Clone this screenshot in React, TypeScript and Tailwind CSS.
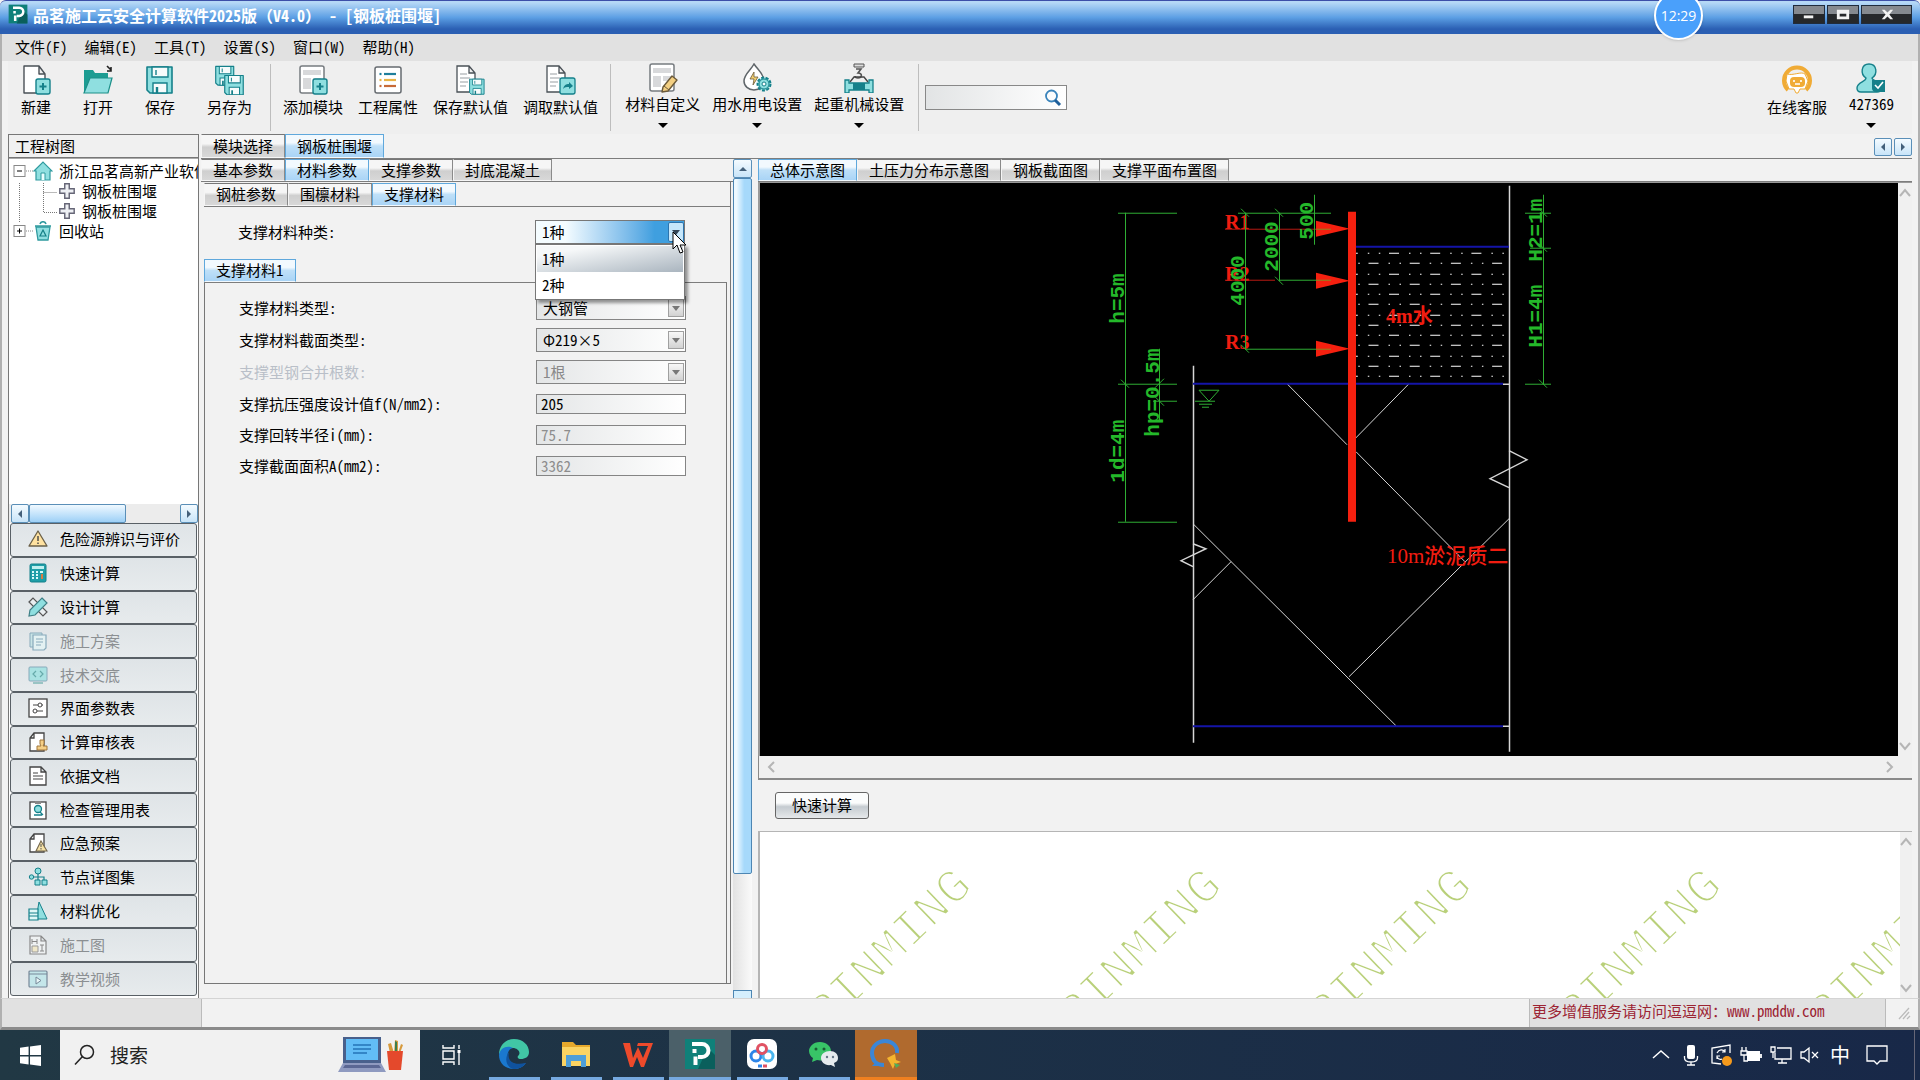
import type { ReactNode } from "react";

const TEAL = "#8fdfe0";
const DEEP = "#15808a";
const INK = "#4a5157";

function Svg({ box = "0 0 30 30", cls = "h-[30px] w-[30px]", children }: { box?: string; cls?: string; children: ReactNode }) {
  return (
    <svg viewBox={box} className={`shrink-0 ${cls}`} fill="none" aria-hidden="true">
      {children}
    </svg>
  );
}

const Sheet = () => <path d="M3 1h15l6 8v19H3z M18 1v8h6" fill="#fff" stroke={INK} strokeWidth="1.4" strokeLinejoin="round" />;
const SheetLines = () => <path d="M7 9h7M7 13h10M7 17h8M7 21h6" stroke="#9aa0a4" strokeWidth="1.2" />;
const Floppy = ({ x = 0, y = 0, s = 1 }) => (
  <g transform={`translate(${x} ${y}) scale(${s})`}>
    <path d="M1 2h25v26H4l-3-3z" fill={TEAL} stroke={DEEP} strokeWidth="1.6" strokeLinejoin="round" />
    <path d="M6 2h16v10H6z M7 18h14v10H7z" fill="#f6fbfb" stroke={DEEP} strokeWidth="1.4" />
    <path d="M11 22v6" stroke={DEEP} strokeWidth="2.4" />
    <path d="M10 5v5" stroke={DEEP} strokeWidth="1.4" />
  </g>
);
const PlusBadge = () => (
  <>
    <rect x="15" y="14" width="14" height="15" rx="2" fill={TEAL} stroke={DEEP} strokeWidth="1.4" />
    <path d="M22 18v7M18.500 21.500h7" stroke={DEEP} strokeWidth="2" />
  </>
);
const Panel = () => (
  <>
    <rect x="2" y="1" width="24" height="27" rx="2" fill="#fff" stroke="#777c80" strokeWidth="1.5" />
    <path d="M5 5h18v5H5z M5 13h8v11H5z M15 13h8v5h-8z" fill="#d8d9db" />
  </>
);

const icons: Record<string, ReactNode> = {
  new: <Svg><Sheet /><PlusBadge /></Svg>,
  open: (
    <Svg>
      <path d="M1 28V5h9l2 3h13v20z" fill="#1c9c92" />
      <path d="M7 13h22l-4 15H1z" fill={TEAL} stroke="#1c8f88" strokeWidth="1.2" />
      <path d="M24 1l4 4M28 2v4h-4" stroke="#222" strokeWidth="1.6" />
    </Svg>
  ),
  save: <Svg><Floppy x={1} /></Svg>,
  saveAs: <Svg><Floppy s={0.72} /><Floppy x={9} y={9} s={0.74} /></Svg>,
  addModule: <Svg><Panel /><PlusBadge /></Svg>,
  props: (
    <Svg>
      <rect x="2" y="2" width="26" height="26" rx="2" fill="#fff" stroke="#666b70" strokeWidth="1.5" />
      <path d="M11 9h12" stroke="#1f7f9c" strokeWidth="2.2" />
      <path d="M11 15h12" stroke="#e9b344" strokeWidth="2.2" />
      <path d="M11 21h12" stroke="#c76a37" strokeWidth="2.2" />
      <path d="M6.500 9h2" stroke="#1f7f9c" strokeWidth="2.2" />
      <path d="M6.500 15h2" stroke="#e9b344" strokeWidth="2.2" />
      <path d="M6.500 21h2" stroke="#c76a37" strokeWidth="2.2" />
    </Svg>
  ),
  saveDefault: <Svg><path d="M1 1h12l6 7v19H1z M13 1v7h6" fill="#fff" stroke={INK} strokeWidth="1.3" /><g transform="translate(-3 0)"><SheetLines /></g><Floppy x={13} y={13} s={0.58} /></Svg>,
  loadDefault: (
    <Svg>
      <path d="M1 1h12l6 7v19H1z M13 1v7h6" fill="#fff" stroke={INK} strokeWidth="1.300" />
      <g transform="translate(-3 0)"><SheetLines /></g>
      <rect x="14" y="13" width="15" height="16" rx="2" fill={TEAL} stroke={DEEP} strokeWidth="1.3" />
      <path d="M17 24c1-4 3-5 6-5v-2l4 4-4 3v-2c-3 0-4 0-6 2z" fill={DEEP} />
    </Svg>
  ),
  material: (
    <Svg>
      <Panel />
      <path d="M15 24L24 13l5 4-9 11-6 1z" fill="#f3cf82" stroke="#6b5a3a" strokeWidth="1.4" strokeLinejoin="round" />
      <path d="M16 23l5 4" stroke="#6b5a3a" />
    </Svg>
  ),
  water: (
    <Svg>
      <path d="M12 1c4 6 10 10 10 17a10 9 0 0 1-20 0C2 11 9 7 12 1z" fill="#fff" stroke="#60666a" strokeWidth="1.5" />
      <path d="M12 9l-4 7h4l-1 6 5-8h-4z" fill="#f2cf70" stroke="#6b5a3a" strokeWidth=".8" />
      <circle cx="22" cy="21" r="6.500" fill={TEAL} stroke={DEEP} strokeWidth="2" strokeDasharray="3 1.500" />
      <circle cx="22" cy="21" r="5" fill={TEAL} stroke={DEEP} />
      <circle cx="22" cy="21" r="2" fill="#fff" stroke={DEEP} />
    </Svg>
  ),
  crane: (
    <Svg>
      <path d="M10 1h10v3H10z" fill="#ddd" stroke="#555" />
      <path d="M12 6h5l-3 4c5 0 4 5 0 5-2 0-3-1-3-2" stroke="#555" strokeWidth="1.600" />
      <path d="M6 19l4-5h10l4 5" stroke="#444" strokeWidth="1.4" />
      <path d="M1 17h4v3h20v-3h4v13h-4v-3H5v3H1z" fill={TEAL} stroke={DEEP} strokeWidth="1.3" />
      <rect x="9" y="20" width="12" height="7" fill={DEEP} />
    </Svg>
  ),
  service: (
    <Svg>
      <path d="M6 25a13 13 0 1 1 18 0" stroke="#f0ab35" strokeWidth="4" />
      <path d="M5 9c6 2 14-3 18 0l3 7-3 8h-5l-2 4h-2l-2-4H7l-3-8z" fill="#fff" stroke="#f0ab35" />
      <rect x="8" y="12" width="15" height="10" rx="4" fill="#f0ab35" />
      <path d="M12 15v2M19 15v2M13 19h5" stroke="#fff" strokeWidth="1.6" />
    </Svg>
  ),
  user: (
    <Svg>
      <path d="M10 15c-6-4-5-14 3-14s9 10 3 14c0 3 10 3 10 10 0 3-3 4-5 4H5c-3 0-4-2-4-4 0-6 9-6 9-10z" fill={TEAL} stroke={DEEP} strokeWidth="1.4" />
      <path d="M16 17h13v12H20c-3 0-4-2-4-4z" fill={DEEP} />
      <path d="M19 22l3 3 5-6" stroke="#fff" strokeWidth="1.6" />
    </Svg>
  ),
};

const S = ({ children }: { children: ReactNode }) => <Svg box="0 0 20 20" cls="h-5 w-5">{children}</Svg>;
const SmallSheet = () => <path d="M6 1h10v18H2V6z M6 1v5H2" fill="#fff" stroke="#444" strokeWidth="1.3" />;

const sideItems: { label: string; off?: boolean; icon: ReactNode }[] = [
  { label: "危险源辨识与评价", icon: <S><path d="M10 2l9 15H1z" fill="#ffe2a0" stroke="#6b6048" strokeWidth="1.3" strokeLinejoin="round" /><path d="M10 7v5M10 13.500v1.500" stroke="#444" strokeWidth="1.4" /></S> },
  { label: "快速计算", icon: <S><rect x="2" y="1" width="16" height="18" rx="1.500" fill="#1f9fa8" stroke={DEEP} /><path d="M4 3h12v3H4z" fill="#bff0f0" /><path d="M4 9h2M8 9h2M12 9h3M4 12h2M8 12h2M4 15h2M8 15h2" stroke="#d9fafa" strokeWidth="1.8" /><path d="M13 11h2v5h-2z" fill="#d87c42" /></S> },
  { label: "设计计算", icon: <S><path d="M1 5l4-4 14 14-4 4z" fill="#e9eef0" stroke="#555" strokeWidth="1.2" /><path d="M14 1l5 5L7 18l-6 1 1-6z" fill={TEAL} stroke="#3f7f86" strokeWidth="1.2" /></S> },
  { label: "施工方案", off: true, icon: <S><path d="M2 2h12v14H2z" fill="#c9e4e6" stroke="#8ab" /><path d="M5 4h13v13l-2 2H5z" fill="#e3f1f2" stroke="#8ab" strokeWidth="1.2" /><path d="M8 8h7M8 11h7M8 14h5" stroke="#8ab" /></S> },
  { label: "技术交底", off: true, icon: <S><rect x="1" y="2" width="18" height="14" rx="1" fill="#a9e2e2" stroke="#8ab" /><path d="M8 6L5 9l3 3M12 6l3 3-3 3" stroke="#6aa" strokeWidth="1.2" /><path d="M5 18h10" stroke="#8bb" strokeWidth="1.6" /></S> },
  { label: "界面参数表", icon: <S><rect x="1" y="1" width="18" height="18" fill="#fff" stroke="#444" strokeWidth="1.3" /><path d="M5 7h10M5 13h10" stroke="#444" /><circle cx="12" cy="7" r="2" fill="#fff" stroke="#444" /><circle cx="7" cy="13" r="2" fill="#fff" stroke="#444" /></S> },
  { label: "计算审核表", icon: <S><SmallSheet /><path d="M12 8h4v4l-1 2h4v4H9v-4h4l-1-2z" fill="#f5cf85" stroke="#a2773a" /></S> },
  { label: "依据文档", icon: <S><path d="M2 1h11l5 5v13H2z M13 1v5h5" fill="#fff" stroke="#444" strokeWidth="1.3" /><path d="M5 7h5M5 10h10M5 13h10" stroke="#444" strokeWidth="1.2" /></S> },
  { label: "检查管理用表", icon: <S><rect x="2" y="2" width="16" height="17" fill="#fff" stroke="#444" strokeWidth="1.3" /><path d="M7 1h6v3H7z" fill="#888" /><circle cx="10" cy="9" r="3.500" fill={TEAL} stroke={DEEP} strokeWidth="1.3" /><path d="M12 12l3 3M6 15h8" stroke={DEEP} strokeWidth="1.3" /></S> },
  { label: "应急预案", icon: <S><SmallSheet /><path d="M13 8l6 10H8z" fill="#f6e2a6" stroke="#75684c" strokeWidth="1.1" /><path d="M13 11v3M13 15v1.500" stroke="#555" /></S> },
  { label: "节点详图集", icon: <S><path d="M10 5v9M4 10h6M10 10h6v4" stroke={DEEP} strokeWidth="1.2" /><circle cx="10" cy="4" r="3" fill={TEAL} stroke={DEEP} /><circle cx="3.500" cy="10" r="2.200" fill={TEAL} stroke={DEEP} /><path d="M7 13h5v5H7zM14 13h5v5h-5z" fill={TEAL} stroke={DEEP} /></S> },
  { label: "材料优化", icon: <S><path d="M11 1l8 17H8z" fill={TEAL} stroke={DEEP} /><path d="M1 8h9v11H1z" fill="#dff7f7" stroke={DEEP} strokeWidth="1.2" /><path d="M1 12h9M1 15h9" stroke={DEEP} strokeWidth="1.2" /></S> },
  { label: "施工图", off: true, icon: <S><path d="M2 1h11l5 5v13H2z M13 1v5h5" fill="#eef1f2" stroke="#888" strokeWidth="1.2" /><path d="M4 4v5M9 4v5M4 6.500h5M12 10h4M12 16h4M14 10v6" stroke="#888" /><path d="M4 11h6v6H4z" fill="#efe7c9" stroke="#999" /></S> },
  { label: "教学视频", off: true, icon: <S><rect x="1" y="2" width="18" height="16" rx="1" fill="#c4e6ea" stroke="#789" strokeWidth="1.2" /><path d="M1 5h18" stroke="#789" /><path d="M8 8l5 3.500L8 15z" fill="#e8f7f8" stroke="#789" /></S> },
];

const idleTab = "border border-t-[#777] border-l-[#f5f5f5] border-r-[#8a8a8a] border-b-transparent bg-linear-to-b from-[#f6f6f6] from-40% via-[#cfcfcf] via-55% to-[#d8d8d8] text-black";
const liveTab = "border border-[#5fa8dc] border-b-transparent bg-linear-to-b from-[#f2f9fe] from-35% via-[#bfe0f8] via-50% to-[#a9d4f6] text-black";

function Tabs({ items, active, cls = "h-[23px]" }: { items: string[]; active: number; cls?: string }) {
  return (
    <div role="tablist" className={`flex shrink-0 items-stretch border-b border-[#7d7d7d] ${cls}`}>
      {items.map((t, i) => (
        <button key={t} type="button" role="tab" aria-selected={i === active} className={`flex items-center justify-center px-[11px] pb-[2px] leading-none whitespace-nowrap ${i === active ? liveTab : idleTab}`}>
          {t}
        </button>
      ))}
    </div>
  );
}

function Tool({ icon, label, drop }: { icon: string; label: string; drop?: boolean }) {
  return (
    <button type="button" className={`flex flex-col items-center whitespace-nowrap ${drop ? "pt-[2px]" : "pt-1"}`}>
      {icons[icon]}
      <span className={`leading-5 ${drop ? "mt-px" : "mt-[2px]"}`}>{label}</span>
      {drop && <span className="mt-[9px] border-x-5 border-t-5 border-x-transparent border-t-black" />}
    </button>
  );
}

const Rule = () => <div className="my-[3px] w-px shrink-0 bg-[#bdbdbd]" />;

const scrollBtn = "flex items-center justify-center border border-[#5a8fb8] rounded-[2px] bg-linear-to-b from-[#f4fbff] to-[#c8e4f8]";
const Arrow = ({ d }: { d: string }) => (
  <svg viewBox="0 0 8 8" className="h-2 w-2" aria-hidden="true"><path d={d} fill="#44607a" /></svg>
);
const LEFT = "M6 0v8L2 4z";
const RIGHT = "M2 0v8l4-4z";
const UP = "M0 6h8L4 2z";
const Chevron = ({ d }: { d: string }) => (
  <svg viewBox="0 0 12 12" className="h-3 w-3" fill="none" aria-hidden="true"><path d={d} stroke="#b5b5b5" strokeWidth="2" /></svg>
);

function TreeRow({ icon, text, indent }: { icon: ReactNode; text: string; indent?: boolean }) {
  return (
    <li className={`flex h-5 items-center gap-[6px] whitespace-nowrap ${indent ? "pl-[49px]" : "pl-1"}`}>
      {icon}
      <span>{text}</span>
    </li>
  );
}

const Expander = ({ open }: { open: boolean }) => (
  <Svg box="0 0 20 20" cls="-mr-[6px] h-5 w-5">
    <rect x="1" y="4.500" width="11" height="11" fill="#fff" stroke="#888" />
    <path d={open ? "M4 10h5" : "M4 10h5M6.500 7.500v5"} stroke="#000" />
    <path d="M13 10h7" stroke="#888" strokeDasharray="1 1" />
  </Svg>
);
const Cross = () => (
  <Svg box="0 0 20 20" cls="h-5 w-[18px]">
    <path d="M7.500 2h5v5.500H18v5h-5.500V18h-5v-5.500H2v-5h5.500z" fill="#eef0f4" stroke="#667" strokeWidth="1.6" />
  </Svg>
);

const field = "w-[150px] rounded-none border border-[#858585] bg-linear-to-r from-[#e4e6e7] to-white";

function Row({ id, label, value, kind, off, faint }: { id: string; label: string; value: string; kind: "select" | "input"; off?: boolean; faint?: boolean }) {
  return (
    <div className={`flex items-center ${kind === "select" ? "h-8" : "h-[31px]"}`}>
      <label htmlFor={id} className={`w-[297px] shrink-0 whitespace-nowrap ${faint ? "text-[#b9bfc8]" : ""}`}>{label}</label>
      {kind === "select" ? (
        <div className="relative">
          <select id={id} disabled={off} className={`h-6 appearance-none pl-[6px] ${field} ${off ? "text-[#888]" : "text-black"}`}>
            <option>{value}</option>
          </select>
          <span className="pointer-events-none absolute top-[3px] right-[2px] flex h-[18px] w-4 items-center justify-center border border-[#a0a0a0] bg-linear-to-b from-[#f8f8f8] to-[#d2d2d2]">
            <span className="border-x-4 border-t-5 border-x-transparent border-t-[#777]" />
          </span>
        </div>
      ) : (
        <input id={id} disabled={off} defaultValue={value} className={`h-5 pl-1 ${field} ${off ? "text-[#8d8d8d]" : "text-black"}`} />
      )}
    </div>
  );
}

function WaterFill() {
  const marks: ReactNode[] = [];
  for (let r = 0; r < 13; r++) {
    const y = Math.round(252 + r * 10.25) + 0.5;
    const shift = r % 2 === 0 ? 0 : -20.5;
    for (let k = -1; k < 4; k++) {
      const x = 1389 + shift + k * 41.2;
      marks.push(<path key={`${r}-${k}`} d={`M${x} ${y}h10M${x + 20} ${y}h1.500M${x + 31} ${y}h1.500`} />);
    }
  }
  return <g clipPath="url(#water)" stroke="#fff" strokeWidth="1.2">{marks}</g>;
}

const dims: [string, number, number][] = [
  ["h=5m", 1124, 323], ["1d=4m", 1124, 482], ["hp=0.5m", 1159, 436],
  ["4000", 1244, 305], ["2000", 1278, 271], ["500", 1313, 239],
  ["H2=1m", 1542, 261], ["H1=4m", 1542, 347],
];

function Section() {
  return (
    <svg viewBox="760 183 1138 572" className="h-full min-w-0 flex-1 bg-black" fill="none" role="img" aria-label="总体示意图">
      <clipPath id="water"><path d="M1356 247h148v136h-148z" /></clipPath>
      <WaterFill />
      <g stroke="#d6d6d6">
        <path d="M1287 383l60 61M1356 451l109 110M1409 383l-54 55M1193 523l203 202M1231 561l-38 38M1509 518l-160 158" />
        <path d="M1509 450l18 9-37 19 19 9M1193 543l13 5-25 12 12 6" strokeWidth="1.4" />
        <path d="M1193.500 365v377M1509.500 185v566" strokeWidth="1.5" />
        <path d="M1503 383.500h7M1503 725.500h7" strokeWidth="1.5" />
      </g>
      <path d="M1356 246h153M1193 383h310M1193 725.500h310" stroke="#1414a8" strokeWidth="2" />
      <g fill="#f01c10" fontFamily="'Liberation Serif', 'Noto Sans CJK SC', serif" fontSize="20">
        <text x="1225" y="228" fontWeight="bold">R1</text>
        <text x="1225" y="280" fontWeight="bold">R2</text>
        <text x="1225" y="348" fontWeight="bold">R3</text>
        <text x="1386" y="322" fontWeight="bold">4m水</text>
        <text x="1387" y="562" fontSize="21" fontWeight="500">10m淤泥质二</text>
      </g>
      <path d="M1225 228.500h92M1225 279.500h50" stroke="#b81a12" />
      <g stroke="#2fae34">
        <path d="M1125.500 212v309M1118 212.500h59M1118 383.500h59M1118 521.500h59M1159.500 348v72M1153 400.500h24" />
        <path d="M1238 212.500h93M1245.500 212v136M1279.500 212v68M1314.500 194v50M1279 279.500h52M1245 348.500h86M1316 228.500h15" />
        <path d="M1543.500 194v190M1525 212.500h26M1530 247.500h21M1525 383.500h26" />
        <path d="M1121 379l8 8M1155 387l9-9M1155 396l9 9M1241 208l8 8M1275 208l8 8M1275 276l8 8M1241 344l8 8M1539 208l8 8M1539 243l8 8M1539 379l8 8" />
        <path d="M1199 389.500h20l-10 11zM1195 400.500h20M1199 403.500h13M1202 406.500h7" />
      </g>
      <path d="M1316 220l34 8-34 8zM1316 272l34 8-34 8zM1316 340l34 8-34 8zM1348 211h8v310h-8z" fill="#f5200f" />
      <path d="M1316 228.500h15M1316 279.500h15M1316 348.500h15" stroke="#8a8a20" />
      <g fill="#24b82a" fontFamily="'Liberation Mono', monospace" fontSize="21" fontWeight="bold">
        {dims.map(([t, x, y]) => <text key={t} transform={`translate(${x} ${y}) rotate(-90)`}>{t}</text>)}
      </g>
    </svg>
  );
}

function Watermark() {
  return (
    <svg viewBox="760 831 1140 167" preserveAspectRatio="xMinYMin slice" className="h-full min-w-0 flex-1 bg-white" aria-hidden="true">
      <g fill="#b9d07a" stroke="#fff" strokeWidth="2.4" fontFamily="'Liberation Mono', monospace" fontSize="49">
        {[0, 1, 2, 3, 4].map((i) => <text key={i} transform={`translate(${826 + i * 250} 1030) rotate(-44)`}>PINMING</text>)}
      </g>
    </svg>
  );
}

function TaskApp({ name, cls = "", bar = "bg-[#76a9e0]", barW = "w-[51px]", children }: { name: string; cls?: string; bar?: string; barW?: string; children: ReactNode }) {
  return (
    <button type="button" aria-label={name} className={`flex h-full w-[62px] flex-col items-center ${cls}`}>
      <span className="flex flex-1 items-center">{children}</span>
      <span className={`h-[3px] ${bar} ${barW}`} />
    </button>
  );
}
const T = ({ children }: { children: ReactNode }) => <Svg box="0 0 32 32" cls="h-8 w-8">{children}</Svg>;
const PLogo = ({ cls }: { cls: string }) => (
  <Svg box="0 0 32 32" cls={cls}>
    <path d="M1 1h30v30H1z" fill="#0f8079" />
    <path d="M19 20l7-8 5 5v14H14z" fill="#0a5f5c" />
    <path d="M8 6h10a6.500 6.500 0 0 1 0 13h-4M10.500 11v4M11.500 18.500V27" stroke="#fff" strokeWidth="4" />
  </Svg>
);
const W = ({ children }: { children: ReactNode }) => <Svg box="0 0 22 22" cls="h-[22px] w-[22px]">{children}</Svg>;

export default function App() {
  return (
    <div className="flex h-screen min-h-[700px] flex-col overflow-hidden bg-[#f2f2f2] font-['Noto_Sans_Mono_CJK_SC','Noto_Sans_CJK_SC',sans-serif] text-[15px] leading-5 text-black">
      <header className="relative flex h-[34px] shrink-0 items-start rounded-t-md border-t border-[#3c4fa8] bg-linear-to-b from-[#b5d8f6] from-5% via-[#5c9fe4] via-50% to-[#2b5fb3] to-85% pl-2">
        <PLogo cls="mt-[3px] h-5 w-5" />
        <h1 className="mt-[2px] ml-[5px] text-[16px] leading-6 font-bold whitespace-pre text-white">品茗施工云安全计算软件2025版（V4.0） - [钢板桩围堰]</h1>
        <div className="absolute -top-[10px] right-[217px] z-10 flex h-[49px] w-[49px] items-center justify-center rounded-full border-2 border-white bg-[#4aa0fb] font-['Open_Sans',sans-serif] text-[14px] text-white shadow">12:29</div>
        <div className="mt-1 mr-2 ml-auto flex gap-[2px]">
          {[["最小化", "w-8", "M7 10h10v3H7z"], ["最大化", "w-8", "M6 4h13v10H6zM9 8v3h7V8z"], ["关闭", "w-[51px]", "M7 4h3l3 3 3-3h3l-4 5 4 5h-3l-3-3-3 3H7l4-5z"]].map(([n, w, d]) => (
            <button key={n} type="button" aria-label={n} className={`flex h-[19px] items-center justify-center border border-[#1f2b3c] bg-linear-to-b from-[#85898f] from-45% to-[#26282b] to-50% ${w}`}>
              <svg viewBox="0 0 25 18" className="h-[17px] w-6" aria-hidden="true"><path d={d} fill="#f2f2f2" fillRule="evenodd" /></svg>
            </button>
          ))}
        </div>
      </header>

      <div className="flex min-h-0 flex-1 flex-col border-x-2 border-[#b0b0b0] px-[6px]">
        <nav className="-mx-[6px] flex h-[27px] shrink-0 items-center gap-[17px] bg-[#e1e1e1] pb-[2px] pl-[13px]">
          {["文件(F)", "编辑(E)", "工具(T)", "设置(S)", "窗口(W)", "帮助(H)"].map((m) => (
            <button key={m} type="button" className="whitespace-nowrap">{m}</button>
          ))}
        </nav>

        <div className="flex h-[73px] shrink-0 items-stretch bg-[#efefef]">
          <div className="flex items-start gap-8 pr-[18px] pl-[13px]">
            <Tool icon="new" label="新建" /><Tool icon="open" label="打开" /><Tool icon="save" label="保存" /><Tool icon="saveAs" label="另存为" />
          </div>
          <Rule />
          <div className="flex items-start gap-[15px] px-3">
            <Tool icon="addModule" label="添加模块" /><Tool icon="props" label="工程属性" /><Tool icon="saveDefault" label="保存默认值" /><Tool icon="loadDefault" label="调取默认值" />
          </div>
          <Rule />
          <div className="flex items-start gap-3 px-[14px]">
            <Tool icon="material" label="材料自定义" drop /><Tool icon="water" label="用水用电设置" drop /><Tool icon="crane" label="起重机械设置" drop />
          </div>
          <Rule />
          <div className="mt-6 ml-[6px] flex h-[25px] w-[142px] items-center border border-[#888] bg-linear-to-r from-[#e2e4e5] to-white pr-1">
            <input aria-label="搜索" className="h-full min-w-0 flex-1 bg-transparent px-1 outline-none" />
            <svg viewBox="0 0 18 18" className="h-[18px] w-[18px]" fill="none" aria-hidden="true"><circle cx="7.500" cy="7" r="5.500" stroke="#3b84bb" strokeWidth="1.800" /><path d="M11 11l5 5" stroke="#1f5f9a" strokeWidth="3" /></svg>
          </div>
          <div className="ml-auto flex items-start gap-[22px] pr-[18px]">
            <Tool icon="service" label="在线客服" /><Tool icon="user" label="427369" drop />
          </div>
        </div>

        <main className="flex min-h-0 flex-1">
          <aside className="mr-[2px] flex w-[191px] shrink-0 flex-col border-x border-[#777]">
            <h2 className="h-6 border-y border-[#777] bg-[#f0f0f0] pl-[6px] leading-[21px]">工程树图</h2>
            <div className="relative min-h-0 flex-1 overflow-hidden border-t border-[#aaa] bg-white pt-[2px]">
              <svg className="pointer-events-none absolute top-6 left-0 h-[60px] w-16" fill="none" aria-hidden="true"><path d="M10.500 0v39M34.500 0v29.500h14M34.500 9.500h14" stroke="#777" strokeDasharray="1 1" /></svg>
              <ul className="relative">
                <TreeRow icon={<><Expander open /><S><path d="M1 10L10 1l9 9h-2v9H3v-9z" fill={TEAL} stroke="#2f9a9f" strokeWidth="1.2" /><path d="M8 19v-7h4v7" fill="#eaffff" stroke="#2f9a9f" /></S></>} text="浙江品茗高新产业软件" />
                <TreeRow indent icon={<Cross />} text="钢板桩围堰" />
                <TreeRow indent icon={<Cross />} text="钢板桩围堰" />
                <TreeRow icon={<><Expander open={false} /><S><path d="M3 6h14l-2 13H5z" fill={TEAL} stroke="#2f9a9f" strokeWidth="1.3" /><path d="M2 5h16M7 3c1-3 5-3 6 0" stroke="#2f9a9f" strokeWidth="1.6" /><path d="M10 9l3 6H7z" stroke="#147f86" strokeWidth="1.2" /></S></>} text="回收站" />
              </ul>
            </div>
            <div className="flex h-[19px] shrink-0 bg-[#ececec] pl-[2px]">
              <button type="button" aria-label="向左滚动" className={`w-[18px] ${scrollBtn}`}><Arrow d={LEFT} /></button>
              <div className="w-[97px] rounded-[2px] border border-[#5a8fb8] bg-linear-to-b from-[#f0f9ff] to-[#9dd0f6]" />
              <button type="button" aria-label="向右滚动" className={`ml-auto w-[18px] ${scrollBtn}`}><Arrow d={RIGHT} /></button>
            </div>
            <div className="flex h-[475px] shrink-0 flex-col bg-white px-px pb-[2px]">
              {sideItems.map((s) => (
                <button key={s.label} type="button" disabled={s.off} className={`flex min-h-0 flex-1 items-center gap-3 rounded-[3px] border border-[#596066] bg-linear-to-b from-[#dfe4e7] to-[#e7ebed] pb-px pl-[17px] ${s.off ? "text-[#8b8f92]" : ""}`}>
                  {s.icon}
                  <span>{s.label}</span>
                </button>
              ))}
            </div>
          </aside>

          <div className="flex min-w-0 flex-1 flex-col">
            <div className="relative shrink-0">
              <Tabs items={["模块选择", "钢板桩围堰"]} active={1} cls="h-[25px]" />
              <div className="absolute top-1 right-0 flex gap-[2px]">
                <button type="button" aria-label="上一页" className={`h-[18px] w-[18px] ${scrollBtn}`}><Arrow d={LEFT} /></button>
                <button type="button" aria-label="下一页" className={`h-[18px] w-[18px] ${scrollBtn}`}><Arrow d={RIGHT} /></button>
              </div>
            </div>
            <div className="flex min-h-0 flex-1">
              <section className="flex w-[532px] shrink-0 flex-col">
                <Tabs items={["基本参数", "材料参数", "支撑参数", "封底混凝土"]} active={1} cls="h-[23px]" />
                <div className="mr-[2px] mb-[14px] flex min-h-0 flex-1 flex-col border-r border-[#777] pt-px pl-[3px]">
                  <Tabs items={["钢桩参数", "围檩材料", "支撑材料"]} active={2} cls="h-6" />
                  <div className="flex min-h-0 flex-1 flex-col border-b border-[#777]">
                    <div className="relative z-10 mt-3 flex h-[26px] shrink-0 items-center pl-[34px]">
                      <label htmlFor="kind" className="w-[297px] shrink-0">支撑材料种类:</label>
                      <div className="relative">
                        <select id="kind" className="h-6 w-[150px] appearance-none rounded-none border border-[#777] bg-linear-to-r from-[#f4fcff] from-20% to-[#3f9fdf] to-80% pl-[6px] text-black">
                          <option>1种</option>
                          <option>2种</option>
                        </select>
                        <span className="pointer-events-none absolute top-[2px] right-[1px] flex h-5 w-4 items-center justify-center rounded-[2px] border border-[#2d74ad] bg-[#c6e7fb]">
                          <span className="border-x-4 border-t-5 border-x-transparent border-t-[#345]" />
                        </span>
                        <ul role="listbox" aria-label="支撑材料种类" className="absolute top-6 left-0 w-[150px] border border-[#777] bg-white p-px leading-[26px] shadow-[3px_3px_3px_rgba(0,0,0,0.4)]">
                          <li role="option" aria-selected="true" className="bg-linear-to-br from-[#f6f8f9] from-20% to-[#aab5bf] pl-[5px]">1种</li>
                          <li role="option" aria-selected="false" className="pl-[5px]">2种</li>
                        </ul>
                        <svg viewBox="0 0 16 24" className="pointer-events-none absolute top-[11px] left-[137px] h-6 w-4" aria-hidden="true"><path d="M1 1v17l4-4 3 8 3-1-3-7h6z" fill="#fff" stroke="#000" /></svg>
                      </div>
                    </div>
                    <Tabs items={["支撑材料1"]} active={0} cls="mt-[14px] mr-[3px] h-6" />
                    <div className="mr-[3px] flex-1 border-x border-[#777] pt-[9px] pl-[34px]">
                      <Row id="type" kind="select" label="支撑材料类型:" value="大钢管" />
                      <Row id="sec" kind="select" label="支撑材料截面类型:" value="Φ219×5" />
                      <Row id="num" kind="select" label="支撑型钢合并根数:" value="1根" off faint />
                      <Row id="f" kind="input" label="支撑抗压强度设计值f(N/mm2):" value="205" />
                      <Row id="i" kind="input" label="支撑回转半径i(mm):" value="75.7" off />
                      <Row id="a" kind="input" label="支撑截面面积A(mm2):" value="3362" off />
                    </div>
                  </div>
                </div>
              </section>

              <div className="flex w-[19px] shrink-0 flex-col overflow-hidden bg-linear-to-r from-[#e2e2e2] to-[#fafafa]">
                <button type="button" aria-label="向上滚动" className={`h-[19px] shrink-0 ${scrollBtn}`}><Arrow d={UP} /></button>
                <div className="h-[83%] shrink-0 rounded-[2px] border border-[#4d86b3] bg-linear-to-r from-[#eef9ff] from-15% to-[#a6d9fb] to-60%" />
                <div className="mt-auto h-2 shrink-0 border border-b-0 border-[#4d86b3] bg-[#d5effd]" />
              </div>

              <section className="ml-[6px] flex min-w-0 flex-1 flex-col">
                <Tabs items={["总体示意图", "土压力分布示意图", "钢板截面图", "支撑平面布置图"]} active={0} cls="h-[23px]" />
                <div className="flex min-h-0 flex-[575] border-t border-l-2 border-[#999]">
                  <Section />
                  <div className="flex w-[14px] shrink-0 flex-col items-center justify-between bg-[#f0f0f0] py-1"><Chevron d="M1 9l5-6 5 6" /><Chevron d="M1 3l5 6 5-6" /></div>
                </div>
                <div className="flex h-6 shrink-0 items-center justify-between border-b-2 border-l border-[#8a8a8a] bg-[#f0f0f0] pr-4 pl-[6px]"><Chevron d="M9 1L4 6l5 5" /><Chevron d="M3 1l5 5-5 5" /></div>
                <div className="flex h-[51px] shrink-0 items-center pb-px pl-[17px]">
                  <button type="button" className="h-[27px] w-[94px] rounded-[3px] border border-[#666] bg-linear-to-b from-[#fbfcfc] from-40% via-[#c5cbd0] via-55% to-[#e6e9eb]">快速计算</button>
                </div>
                <div className="flex min-h-0 flex-[166] border-t border-l-2 border-[#b5b5b5]">
                  <Watermark />
                  <div className="flex w-3 shrink-0 flex-col items-center justify-between bg-[#f0f0f0] py-1"><Chevron d="M1 9l5-6 5 6" /><Chevron d="M1 3l5 6 5-6" /></div>
                </div>
              </section>
            </div>
          </div>
        </main>
      </div>

      <footer className="flex h-8 shrink-0 items-center border-x-2 border-t border-b-3 border-[#b0b0b0] border-t-[#d4d4d4] border-b-[#8b8b8b] bg-[#f2f2f2]">
        <div className="h-full w-[200px] shrink-0 border-r border-[#bbb] bg-[#e1e1e1]" />
        <div className="ml-auto flex h-full w-[357px] items-center border-x border-[#bbb] bg-[#e1e1e1] pb-[5px] pl-[2px]">
          <a href="http://www.pmddw.com" className="whitespace-nowrap text-[#9c2433]">更多增值服务请访问逗逗网：www.pmddw.com</a>
        </div>
        <svg viewBox="0 0 30 20" className="h-5 w-8" aria-hidden="true"><path d="M12 16l10-11M16 16l6-7M20 16l3-3" stroke="#bbb" strokeWidth="1.300" /></svg>
      </footer>

      <div className="flex h-[50px] shrink-0 items-stretch bg-linear-to-r from-[#213844] to-[#182848]">
        <button type="button" aria-label="开始" className="flex w-[60px] shrink-0 items-center justify-center">
          <Svg box="0 0 22 22" cls="h-[21px] w-[21px]"><path d="M0 3l9-1.300V10.500H0zM10.500 1.500L22 0v10.500H10.500zM0 12h9v8.500L0 19zM10.500 12H22v10l-11.500-1.500z" fill="#fff" /></Svg>
        </button>
        <div className="flex w-[360px] shrink-0 items-center bg-[#f1f1f1] pr-4 pl-[14px]">
          <svg viewBox="0 0 22 22" className="h-[22px] w-[22px]" fill="none" aria-hidden="true"><circle cx="13" cy="8" r="6.500" stroke="#222" strokeWidth="1.500" /><path d="M8.500 12.500L1 20.500" stroke="#222" strokeWidth="1.500" /></svg>
          <input aria-label="搜索" placeholder="搜索" className="ml-[14px] min-w-0 flex-1 bg-transparent font-['Noto_Sans_CJK_SC',sans-serif] text-[19px] text-[#222] outline-none placeholder:text-[#222]" />
          <Svg box="0 0 66 38" cls="h-[38px] w-[66px]">
            <path d="M5 1h38v26H5z" fill="#49608c" /><path d="M8 3h32v21H8z" fill="#62bdf6" /><path d="M15 9h18M15 13h18M15 17h14" stroke="#2474b8" strokeWidth="1.400" />
            <path d="M5 27h38l5 9H0z" fill="#8f9ac0" /><path d="M7 29h34l2 3H5z" fill="#5b6794" />
            <path d="M52 17l-2-9 3-1 3 10zM56 17l1-13 3 1v12zM60 17l3-9 2 1-3 8z" fill="#d79a3c" /><path d="M57 15V5l2 1v9z" fill="#3a7f4f" />
            <path d="M49 15h16l-2 19H51z" fill="#e4492c" />
          </Svg>
        </div>
        <button type="button" aria-label="任务视图" className="flex w-[63px] shrink-0 items-center justify-center">
          <W><path d="M2 1v3h11V1M2 21v-3h11v3M2 7h11v8H2zM18 1v4M18 9v12" stroke="#fff" strokeWidth="1.400" /><path d="M16.500 6h3v3h-3z" fill="#fff" /></W>
        </button>
        <div className="flex shrink-0">
          <TaskApp name="Edge"><T><path d="M1 17C1 7 8 1 16 1c9 0 15 6 15 13 0 5-4 7-8 7-3 0-4-2-3-3 4-4-1-8-5-8C7 10 2 14 1 17z" fill="#41c6a5" /><path d="M1 17c1-8 9-10 14-7-5 1-7 7-4 12 3 4 9 6 17 3-3 4-7 6-12 6C7 31 1 25 1 17z" fill="#1a78cf" /><path d="M11 14c-2 8 3 14 17 11-3 4-7 6-12 6C8 30 6 20 11 14z" fill="#0f529e" /></T></TaskApp>
          <TaskApp name="文件资源管理器"><T><path d="M2 4h11l3 3h14v21H2z" fill="#e7a92c" /><path d="M2 9h28v19H2z" fill="#fcd462" /><path d="M6 17h20v12h-5v-6H11v6H6z" fill="#4f9fd8" /></T></TaskApp>
          <TaskApp name="WPS"><T><path d="M1 5h7l3 15 5-11 5 11 5-12H15l1-3h15l-9 24h-3l-4-10-4 10H8z" fill="#ee4a2b" /></T></TaskApp>
          <TaskApp name="品茗" cls="bg-[#4b6069]" barW="w-full"><PLogo cls="h-8 w-8" /></TaskApp>
          <TaskApp name="百度网盘"><T><rect x="1" y="1" width="30" height="30" rx="7" fill="#fff" /><circle cx="10" cy="18" r="5" stroke="#2d85e8" strokeWidth="3" /><circle cx="22" cy="18" r="5" stroke="#4bb6ee" strokeWidth="3" /><circle cx="16" cy="11" r="4.500" stroke="#e05263" strokeWidth="3" /><path d="M12 28h4" stroke="#2d85e8" strokeWidth="3" /><path d="M17 28h4" stroke="#e05263" strokeWidth="3" /></T></TaskApp>
          <TaskApp name="微信"><T><path d="M12 4c-7 0-11 5-11 9 0 3 2 6 4 7l-1 4 5-2c8 2 14-4 14-9s-5-9-11-9z" fill="#38c467" /><circle cx="8" cy="11" r="1.500" fill="#1a5a35" /><circle cx="16" cy="11" r="1.500" fill="#1a5a35" /><path d="M22 13c-5 0-9 3-9 7s4 8 10 7l4 2-1-4c3-1 4-3 4-5 0-4-3-7-8-7z" fill="#e6ebee" /><circle cx="19" cy="19" r="1.200" fill="#678" /><circle cx="25" cy="19" r="1.200" fill="#678" /></T></TaskApp>
          <TaskApp name="浏览器" cls="bg-[#b06a2e]" bar="bg-[#f08020]" barW="w-full"><T><path d="M14 27C5 27 2 21 2 15 2 8 8 3 15 3s13 5 12 12" stroke="#3b86d6" strokeWidth="4" /><path d="M2 28l5-5 4 5z" fill="#3b86d6" /><path d="M17 20l8-4 1 6 5 2-6 2-2 5-3-6z" fill="#f4b52e" /><path d="M24 25l6 2-4 3z" fill="#4fae5b" /></T></TaskApp>
        </div>
        <div className="ml-auto flex items-center gap-2 border-r border-[#667] pr-[26px] text-white">
          <W><path d="M3 14l8-7 8 7" stroke="#fff" strokeWidth="1.500" /></W>
          <W><rect x="7" y="1" width="8" height="14" rx="2" fill="#fff" /><path d="M4.500 12v2c0 3 2 4 6.500 4s6.500-1 6.500-4v-2M11 18v3M7 21h8" stroke="#fff" strokeWidth="1.300" /></W>
          <W><path d="M20 9V1L2 4v15l9 1" stroke="#fff" strokeWidth="1.300" /><path d="M7 9c2-4 6-4 8-1M15 5v3h-3M7 15v-3h3M7 13c1 2 3 3 5 2" stroke="#fff" strokeWidth="1.200" /><circle cx="17" cy="17" r="5" fill="#f59a1c" /></W>
          <W><path d="M2 3v4M6 3v4M1 7h6v4H4H1zM4 11v6h4" stroke="#fff" strokeWidth="1.300" /><path d="M7 7h13v10H7z" fill="#fff" /><path d="M21 10v4" stroke="#fff" strokeWidth="1.800" /></W>
          <W><path d="M7 4h14v11H5V9M12 15v4M8 19h9M1 3h4v5H1zM3 8v6" stroke="#fff" strokeWidth="1.300" /></W>
          <W><path d="M1 8h3l5-4v14l-5-4H1zM12 8l6 6M18 8l-6 6" stroke="#fff" strokeWidth="1.300" /></W>
          <span className="text-[20px] leading-6">中</span>
          <span className="ml-2"><W><path d="M1 2h20v15h-7l-3 3-3-3H1z" stroke="#fff" strokeWidth="1.300" /></W></span>
        </div>
        <div className="w-[5px]" />
      </div>
    </div>
  );
}
